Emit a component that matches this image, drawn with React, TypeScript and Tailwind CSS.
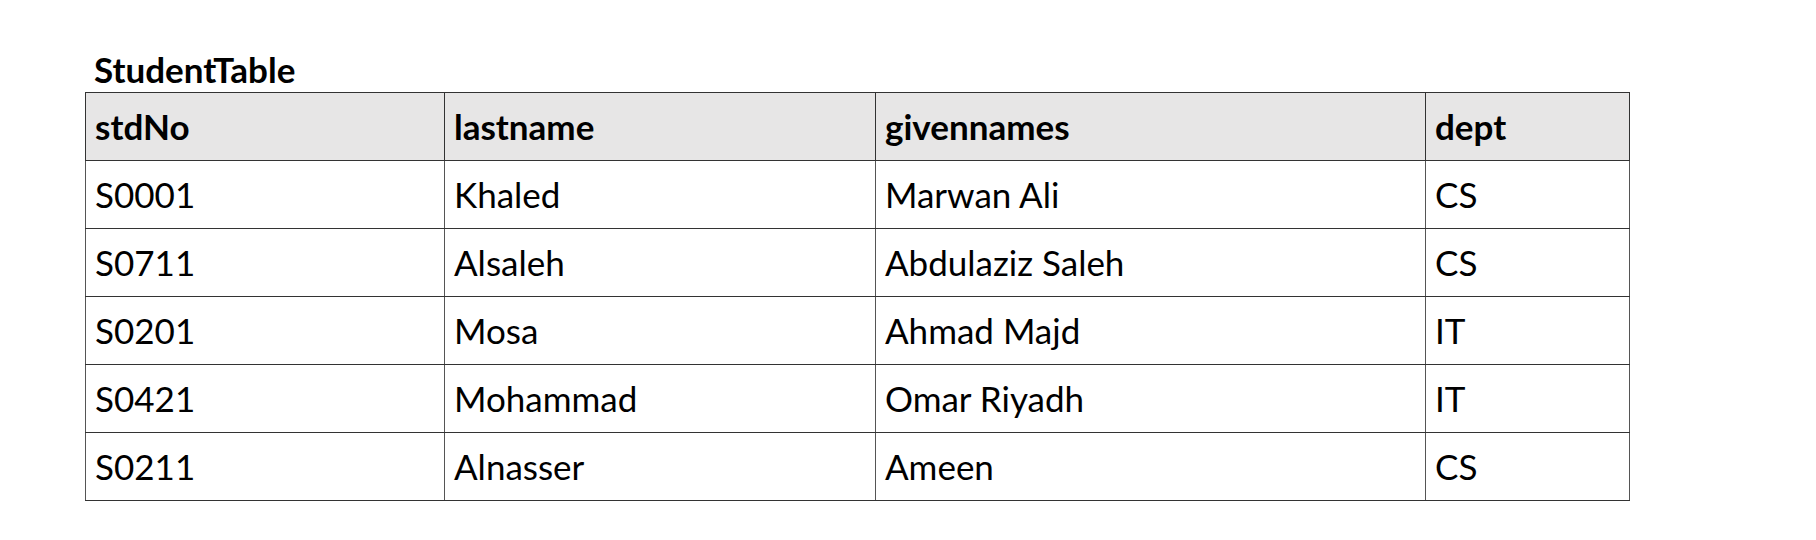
const columns = [
  { key: "stdNo", width: "w-[359px]" },
  { key: "lastname", width: "w-[431px]" },
  { key: "givennames", width: "w-[550px]" },
  { key: "dept", width: "w-[204px]" },
];

const rows = [
  ["S0001", "Khaled", "Marwan Ali", "CS"],
  ["S0711", "Alsaleh", "Abdulaziz Saleh", "CS"],
  ["S0201", "Mosa", "Ahmad Majd", "IT"],
  ["S0421", "Mohammad", "Omar Riyadh", "IT"],
  ["S0211", "Alnasser", "Ameen", "CS"],
];

const App = () => {
  return (
    <div
      className="w-[1816px] h-[540px] bg-white text-black pl-[85px] pt-[49px]"
      style={{ fontFamily: "Lato, 'Open Sans', sans-serif" }}
    >
      <div className="pl-[9px] mb-[3px] text-[35px] leading-[40px] font-bold">StudentTable</div>
      <table className="border-collapse border border-[#333]">
        <thead>
          <tr className="bg-[#e7e6e6]">
            {columns.map((c) => (
              <th
                key={c.key}
                className={`${c.width} h-[68px] border border-[#333] pl-[9px] text-left align-middle text-[35px] font-bold`}
              >
                {c.key}
              </th>
            ))}
          </tr>
        </thead>
        <tbody>
          {rows.map((r, i) => (
            <tr key={i}>
              {r.map((cell, j) => (
                <td
                  key={j}
                  className={`${columns[j].width} h-[68px] border-y border-y-[#333] border-x border-x-[#555] pl-[9px] text-left align-middle text-[35px]`}
                >
                  {cell}
                </td>
              ))}
            </tr>
          ))}
        </tbody>
      </table>
    </div>
  );
};

export default App;
